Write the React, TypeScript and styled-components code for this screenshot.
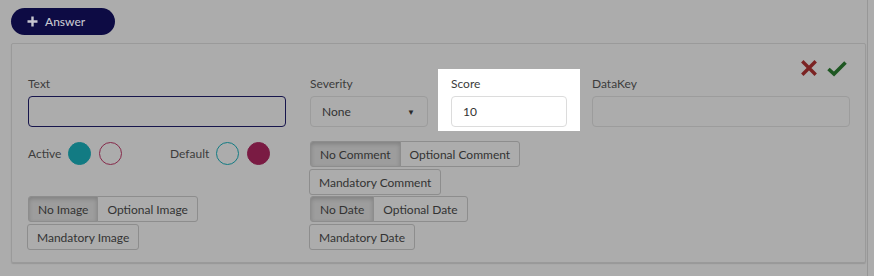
import React from "react";
import styled, { createGlobalStyle } from "styled-components";

const Global = createGlobalStyle`
  html, body { margin: 0; padding: 0; background: #acacac; }
  body { font-family: Lato, "Open Sans", "Liberation Sans", sans-serif; color: #3a3a3a; }
  * { box-sizing: border-box; }
`;

const Page = styled.div`
  width: 868px;
  min-height: 276px;
  border-right: 1px solid #979797;
  padding: 8px 0 0 11px;
  display: flex;
  flex-direction: column;
  align-items: flex-start;
`;

const AddButton = styled.button`
  height: 27px;
  width: 104px;
  border: none;
  border-radius: 14px;
  background: #0d0b44;
  color: #c6c6cf;
  font-family: inherit;
  font-size: 12px;
  font-weight: 500;
  display: flex;
  align-items: center;
  gap: 7px;
  padding: 0 0 0 16px;
`;

const Panel = styled.div`
  margin-top: 8px;
  width: 855px;
  border: 1px solid #9a9a9a;
  border-radius: 2px;
  box-shadow: 0 1px 1px rgba(0, 0, 0, 0.12);
  padding: 15px 15px 12px 16px;
  display: flex;
  flex-direction: column;
`;

const Toolbar = styled.div`
  display: flex;
  justify-content: flex-end;
  align-items: center;
  gap: 9px;
  height: 18px;
  padding-right: 2px;
`;

const IconBtn = styled.span`
  display: inline-flex;
  align-items: center;
  justify-content: center;
`;

const FieldRow = styled.div`
  margin-top: -8px;
  display: flex;
  align-items: flex-start;
`;

const Field = styled.div<{ $w: number; $ml?: number; $spot?: boolean }>`
  display: flex;
  flex-direction: column;
  flex: 0 0 auto;
  width: ${(p) => p.$w}px;
  margin-left: ${(p) => p.$ml ?? 0}px;
  padding: ${(p) => (p.$spot ? "6px 13px 4px" : "6px 0 4px")};
  background: ${(p) => (p.$spot ? "#ffffff" : "transparent")};
`;

const Label = styled.label`
  font-size: 12px;
  line-height: 18px;
  color: #3c3c3c;
  margin-bottom: 3px;
`;

const Input = styled.div<{ $focus?: boolean; $light?: boolean }>`
  height: 31px;
  border: 1px solid ${(p) => (p.$focus ? "#17154c" : p.$light ? "#dcdcdc" : "#9c9c9c")};
  border-radius: 4px;
  background: ${(p) => (p.$light ? "#fff" : "transparent")};
  font-size: 12px;
  color: #333;
  display: flex;
  align-items: center;
  padding: 0 11px;
`;

const Select = styled(Input)`
  justify-content: space-between;
  padding: 0 12px 0 11px;
`;

const Caret = styled.span`
  font-size: 8px;
  color: #2a2a2a;
`;

const OptionsRow = styled.div`
  display: flex;
  align-items: flex-start;
  padding-top: 10px;
`;

const Column = styled.div<{ $w?: number }>`
  display: flex;
  flex-direction: column;
  flex: 0 0 auto;
  width: ${(p) => (p.$w ? `${p.$w}px` : "auto")};
`;

const SwatchRow = styled.div`
  display: flex;
  align-items: center;
  height: 24px;
  font-size: 12px;
  color: #3c3c3c;
  margin-bottom: 31px;
`;

const SwatchGroup = styled.div<{ $w: number }>`
  display: flex;
  align-items: center;
  width: ${(p) => p.$w}px;
`;

const SwatchLabel = styled.span`
  margin-right: 7px;
`;

const Dot = styled.span<{ $color: string; $filled?: boolean }>`
  width: 23px;
  height: 23px;
  border-radius: 50%;
  margin-right: 8px;
  border: 1.5px solid ${(p) => p.$color};
  background: ${(p) => (p.$filled ? p.$color : "transparent")};
`;

const BtnRow = styled.div<{ $mt?: number }>`
  display: flex;
  margin-top: ${(p) => p.$mt ?? 0}px;
`;

const Choice = styled.button<{ $active?: boolean; $first?: boolean }>`
  height: 26px;
  padding: 0 9px;
  margin-left: ${(p) => (p.$first ? 0 : -1)}px;
  border: 1px solid #8d8d8d;
  border-radius: ${(p) => (p.$first ? "3px 0 0 3px" : "0 3px 3px 0")};
  background: ${(p) => (p.$active ? "#9d9d9d" : "#acacac")};
  box-shadow: ${(p) => (p.$active ? "inset 0 2px 4px rgba(0,0,0,0.18)" : "none")};
  font-family: inherit;
  font-size: 12px;
  color: #333;
  white-space: nowrap;
`;

const Single = styled(Choice)`
  margin-left: -1px;
  border-radius: 3px;
`;

function XIcon() {
  return (
    <svg width="16" height="16" viewBox="0 0 16 16">
      <path d="M2.5 2.5 L13.5 13.5 M13.5 2.5 L2.5 13.5" stroke="#7b2323" strokeWidth="3.4" strokeLinecap="square" />
    </svg>
  );
}

function CheckIcon() {
  return (
    <svg width="22" height="17" viewBox="0 0 22 17">
      <path d="M2.5 9 L8 14 L19.5 2.5" stroke="#1e5722" strokeWidth="3.6" fill="none" strokeLinejoin="miter" />
    </svg>
  );
}

function PlusIcon() {
  return (
    <svg width="11" height="11" viewBox="0 0 11 11">
      <path d="M5.5 0.5 V10.5 M0.5 5.5 H10.5" stroke="#c6c6cf" strokeWidth="2.4" />
    </svg>
  );
}

export default function App() {
  return (
    <>
      <Global />
      <Page>
        <AddButton>
          <PlusIcon />
          Answer
        </AddButton>
        <Panel>
          <Toolbar>
            <IconBtn><XIcon /></IconBtn>
            <IconBtn><CheckIcon /></IconBtn>
          </Toolbar>
          <FieldRow>
            <Field $w={258}>
              <Label>Text</Label>
              <Input $focus />
            </Field>
            <Field $w={118} $ml={24}>
              <Label>Severity</Label>
              <Select>
                None
                <Caret>▼</Caret>
              </Select>
            </Field>
            <Field $w={142} $ml={10} $spot>
              <Label>Score</Label>
              <Input $light>10</Input>
            </Field>
            <Field $w={258} $ml={12}>
              <Label>DataKey</Label>
              <Input />
            </Field>
          </FieldRow>
          <OptionsRow>
            <Column $w={282}>
              <SwatchRow>
                <SwatchGroup $w={142}>
                  <SwatchLabel>Active</SwatchLabel>
                  <Dot $color="#127b83" $filled />
                  <Dot $color="#86294a" />
                </SwatchGroup>
                <SwatchGroup $w={120}>
                  <SwatchLabel>Default</SwatchLabel>
                  <Dot $color="#127b83" />
                  <Dot $color="#7a1b43" $filled />
                </SwatchGroup>
              </SwatchRow>
              <BtnRow>
                <Choice $first $active>No Image</Choice>
                <Choice>Optional Image</Choice>
              </BtnRow>
              <BtnRow $mt={2}>
                <Single>Mandatory Image</Single>
              </BtnRow>
            </Column>
            <Column>
              <BtnRow>
                <Choice $first $active>No Comment</Choice>
                <Choice>Optional Comment</Choice>
              </BtnRow>
              <BtnRow $mt={2}>
                <Single>Mandatory Comment</Single>
              </BtnRow>
              <BtnRow $mt={1}>
                <Choice $first $active>No Date</Choice>
                <Choice>Optional Date</Choice>
              </BtnRow>
              <BtnRow $mt={2}>
                <Single>Mandatory Date</Single>
              </BtnRow>
            </Column>
          </OptionsRow>
        </Panel>
      </Page>
    </>
  );
}
